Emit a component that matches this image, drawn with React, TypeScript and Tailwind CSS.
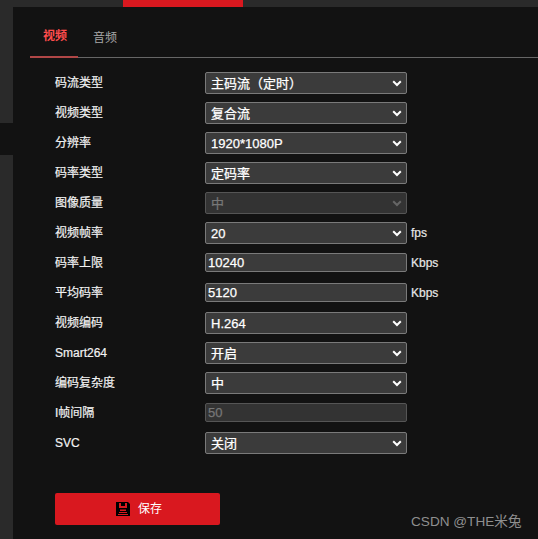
const font = { fontFamily: '"Liberation Sans", "Noto Sans CJK SC", sans-serif' }

type Row = {
  label: string
  kind: 'select' | 'input'
  value: string
  disabled?: boolean
  unit?: string
}

const rows: Row[] = [
  { label: '码流类型', kind: 'select', value: '主码流（定时）' },
  { label: '视频类型', kind: 'select', value: '复合流' },
  { label: '分辨率', kind: 'select', value: '1920*1080P' },
  { label: '码率类型', kind: 'select', value: '定码率' },
  { label: '图像质量', kind: 'select', value: '中', disabled: true },
  { label: '视频帧率', kind: 'select', value: '20', unit: 'fps' },
  { label: '码率上限', kind: 'input', value: '10240', unit: 'Kbps' },
  { label: '平均码率', kind: 'input', value: '5120', unit: 'Kbps' },
  { label: '视频编码', kind: 'select', value: 'H.264' },
  { label: 'Smart264', kind: 'select', value: '开启' },
  { label: '编码复杂度', kind: 'select', value: '中' },
  { label: 'I帧间隔', kind: 'input', value: '50', disabled: true },
  { label: 'SVC', kind: 'select', value: '关闭' },
]

function SaveIcon() {
  return (
    <svg width="14" height="14" viewBox="0 0 14 14" className="shrink-0">
      <path d="M0 0H12L14 2V14H0Z" fill="#000" />
      <path d="M3 1H5V4H9V1H11V6H3Z" fill="#d9181f" />
      <path d="M4 7.5H10V9H4ZM3 10H11V11H3ZM2 12H12V13H2Z" fill="#d9181f" />
    </svg>
  )
}

function Field({ row }: { row: Row }) {
  const base =
    'rounded-[2px] border border-[#7a7a7a] bg-[#3b3b3b] text-[13px] leading-none text-white outline-none [-webkit-text-stroke:0.25px_currentColor] disabled:border-[#555] disabled:bg-[#333] disabled:text-[#777]'
  if (row.kind === 'input') {
    return (
      <input
        readOnly
        disabled={row.disabled}
        defaultValue={row.value}
        className={`${base} mb-[1px] h-[19px] w-[202px] px-[2px]`}
        style={font}
      />
    )
  }
  return (
    <div className="relative h-[22px] w-[202px]">
      <select
        disabled={row.disabled}
        defaultValue={row.value}
        className={`${base} block h-[22px] w-full appearance-none pl-[5px]`}
        style={font}
      >
        <option value={row.value}>{row.value}</option>
      </select>
      <svg
        width="10"
        height="7"
        viewBox="0 0 10 7"
        className={`pointer-events-none absolute right-[5px] top-[8px] ${row.disabled ? 'text-[#666]' : 'text-white'}`}
      >
        <path d="M1.2 1.2L5 5L8.8 1.2" fill="none" stroke="currentColor" strokeWidth="2" />
      </svg>
    </div>
  )
}

export default function App() {
  return (
    <div className="flex h-[539px] w-[538px] flex-col overflow-hidden bg-[#121212]" style={font}>
      {/* top strip */}
      <div className="flex h-[7px] shrink-0 bg-[#2a2a2a]">
        <div className="ml-[123px] w-[120px] bg-[#d9181f]" />
      </div>

      <div className="flex min-h-0 flex-1">
        {/* left nav edge */}
        <div className="flex w-[13px] shrink-0 flex-col">
          <div className="h-[116px] bg-[#2a2a2a]" />
          <div className="h-[32px] bg-[#121212]" />
          <div className="flex-1 bg-[#2a2a2a]" />
        </div>

        <div className="min-w-0 flex-1">
          {/* tabs */}
          <div className="ml-[17px] flex h-[51px] border-b border-[#666]">
            <div className="flex h-[51px] w-[48px] justify-center border-b-[2px] border-[#b04646] pt-[22px] text-[12px] font-bold leading-[15px] text-[#ff4d4d]">
              <span className="ml-[2px]">视频</span>
            </div>
            <div className="ml-[15px] pt-[24px] text-[12px] leading-[15px] text-[#a8a8a8]">音频</div>
          </div>

          {/* form */}
          <div className="ml-[42px] mt-[14px] flex flex-col gap-[8px]">
            {rows.map(row => (
              <div key={row.label} className="flex h-[22px] items-center">
                <div className="w-[150px] text-[12px] text-[#f2f2f2] [-webkit-text-stroke:0.2px_currentColor]">{row.label}</div>
                <Field row={row} />
                {row.unit && (
                  <div className="ml-[4px] text-[12px] text-[#e8e8e8] [-webkit-text-stroke:0.2px_currentColor]">{row.unit}</div>
                )}
              </div>
            ))}
          </div>

          {/* save + watermark */}
          <div className="ml-[42px] mt-[32px] flex items-center">
            <button className="flex h-[32px] w-[165px] items-center justify-center gap-[8px] rounded-[2px] bg-[#d9181f] pl-[3px] text-[12px] text-white">
              <SaveIcon />
              保存
            </button>
            <div className="ml-[191px] mt-[26px] whitespace-nowrap text-[13.6px] text-[#8f8f8f]">CSDN @THE米兔</div>
          </div>
        </div>
      </div>
    </div>
  )
}
